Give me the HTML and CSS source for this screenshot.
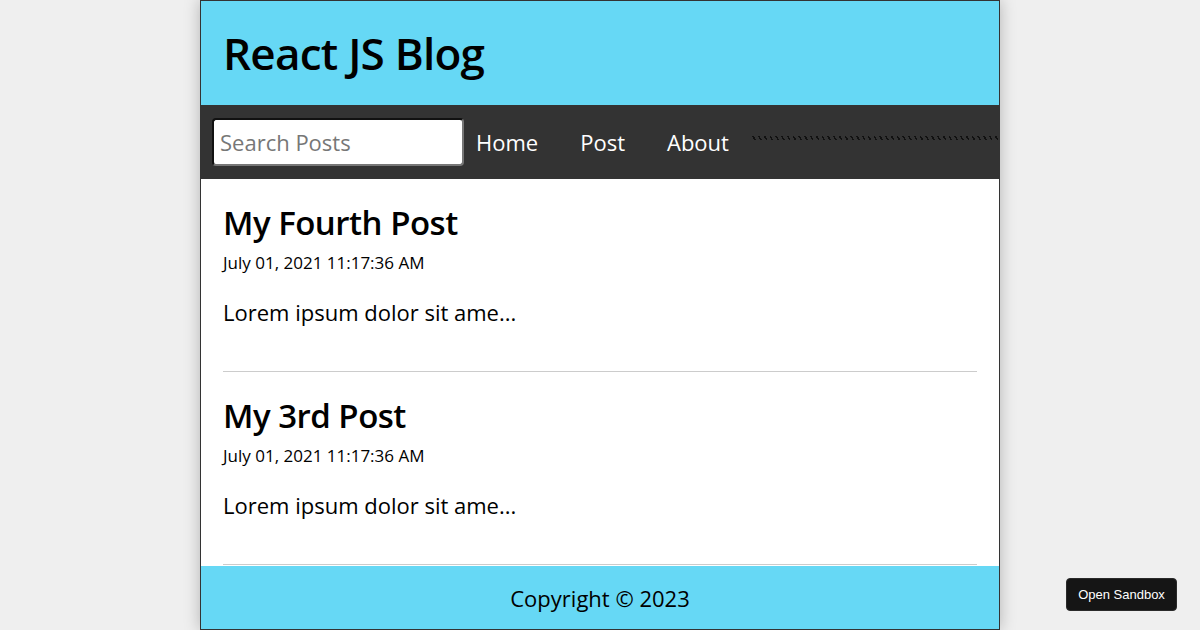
FILE: index.html
```html
<!DOCTYPE html>
<html lang="en">
<head>
  <meta charset="UTF-8">
  <meta name="viewport" content="width=device-width, initial-scale=1">
  <title>React JS Blog</title>
  <link rel="stylesheet" href="styles.css">
</head>
<body>

  <div class="app">
    <header class="cabecera">
      <h1>React JS Blog</h1>
    </header>

    <nav class="nav">
      <form class="buscar" onsubmit="return false">
        <input type="text" id="search" placeholder="Search Posts">
      </form>
      <ul class="enlaces">
        <li><a href="#">Home</a></li>
        <li><a href="#">Post</a></li>
        <li><a href="#">About</a></li>
      </ul>
      <div class="rayas"></div>
    </nav>

    <main class="home">
      <article class="post">
        <h2>My Fourth Post</h2>
        <p class="fecha">July 01, 2021 11:17:36 AM</p>
        <p class="cuerpo">Lorem ipsum dolor sit ame...</p>
      </article>
      <article class="post">
        <h2>My 3rd Post</h2>
        <p class="fecha">July 01, 2021 11:17:36 AM</p>
        <p class="cuerpo">Lorem ipsum dolor sit ame...</p>
      </article>
    </main>

    <footer class="pie">
      <p>Copyright &copy; 2023</p>
    </footer>
  </div>

  <button class="sandbox">Open Sandbox</button>

</body>
</html>
```

FILE: styles.css
```css
* {
  box-sizing: border-box;
}

body {
  margin: 0;
  font-family: 'Open Sans', sans-serif;
  background: #efefef;
  color: #000;
}

.app {
  width: 800px;
  height: 100vh;
  margin: 0 auto;
  border: 1px solid #333;
  display: flex;
  flex-direction: column;
  background: #fff;
  box-shadow: 0 0 15px rgba(0, 0, 0, 0.25);
  overflow: hidden;
}

.cabecera {
  background: #66d8f5;
  height: 104px;
  flex-shrink: 0;
  display: flex;
  align-items: center;
  padding: 0 22px;
}

.cabecera h1 {
  margin: 0;
  font-size: 44px;
  font-weight: 600;
  letter-spacing: -0.75px;
}

.nav {
  background: #333;
  height: 74px;
  flex-shrink: 0;
  display: flex;
  align-items: center;
  padding: 0 0 0 11px;
}

.buscar input {
  width: 252px;
  height: 48px;
  padding: 0 6px;
  font-family: 'Open Sans', sans-serif;
  font-size: 22px;
  border: 2px solid #111;
  border-right-color: #777;
  border-bottom-color: #777;
  border-radius: 4px;
  outline: none;
}

.buscar input::placeholder {
  color: #777;
}

.enlaces {
  list-style: none;
  margin: 0 0 0 12px;
  padding: 0;
  display: flex;
  gap: 42px;
}

.enlaces a {
  color: #fff;
  text-decoration: none;
  font-size: 22px;
}

.rayas {
  flex: 1;
  height: 4px;
  margin: 0 0 9px 23px;
  background: repeating-linear-gradient(60deg, transparent 0 2px, #111 2px 3.5px, transparent 3.5px 5px);
}

.home {
  flex: 1;
  padding: 0 22px;
  overflow: hidden;
}

.post {
  padding: 25px 0 45px;
  border-bottom: 1px solid #ccc;
}

.post h2 {
  margin: 0;
  font-size: 33px;
  font-weight: 600;
  line-height: 38px;
  letter-spacing: -0.5px;
}

.fecha {
  margin: 10px 0 0;
  font-size: 17px;
  line-height: 22px;
}

.cuerpo {
  margin: 24px 0 0;
  font-size: 22px;
  line-height: 28px;
}

.pie {
  background: #66d8f5;
  height: 63px;
  flex-shrink: 0;
  display: flex;
  align-items: center;
  justify-content: center;
}

.pie p {
  margin: 0;
  font-size: 22px;
}

.sandbox {
  position: fixed;
  right: 23px;
  bottom: 19px;
  width: 111px;
  height: 33px;
  background: #151515;
  color: #fff;
  border: 1px solid #2a2a2a;
  border-radius: 4px;
  font-family: 'Liberation Sans', Arial, sans-serif;
  font-size: 13px;
  padding: 0;
}
```
